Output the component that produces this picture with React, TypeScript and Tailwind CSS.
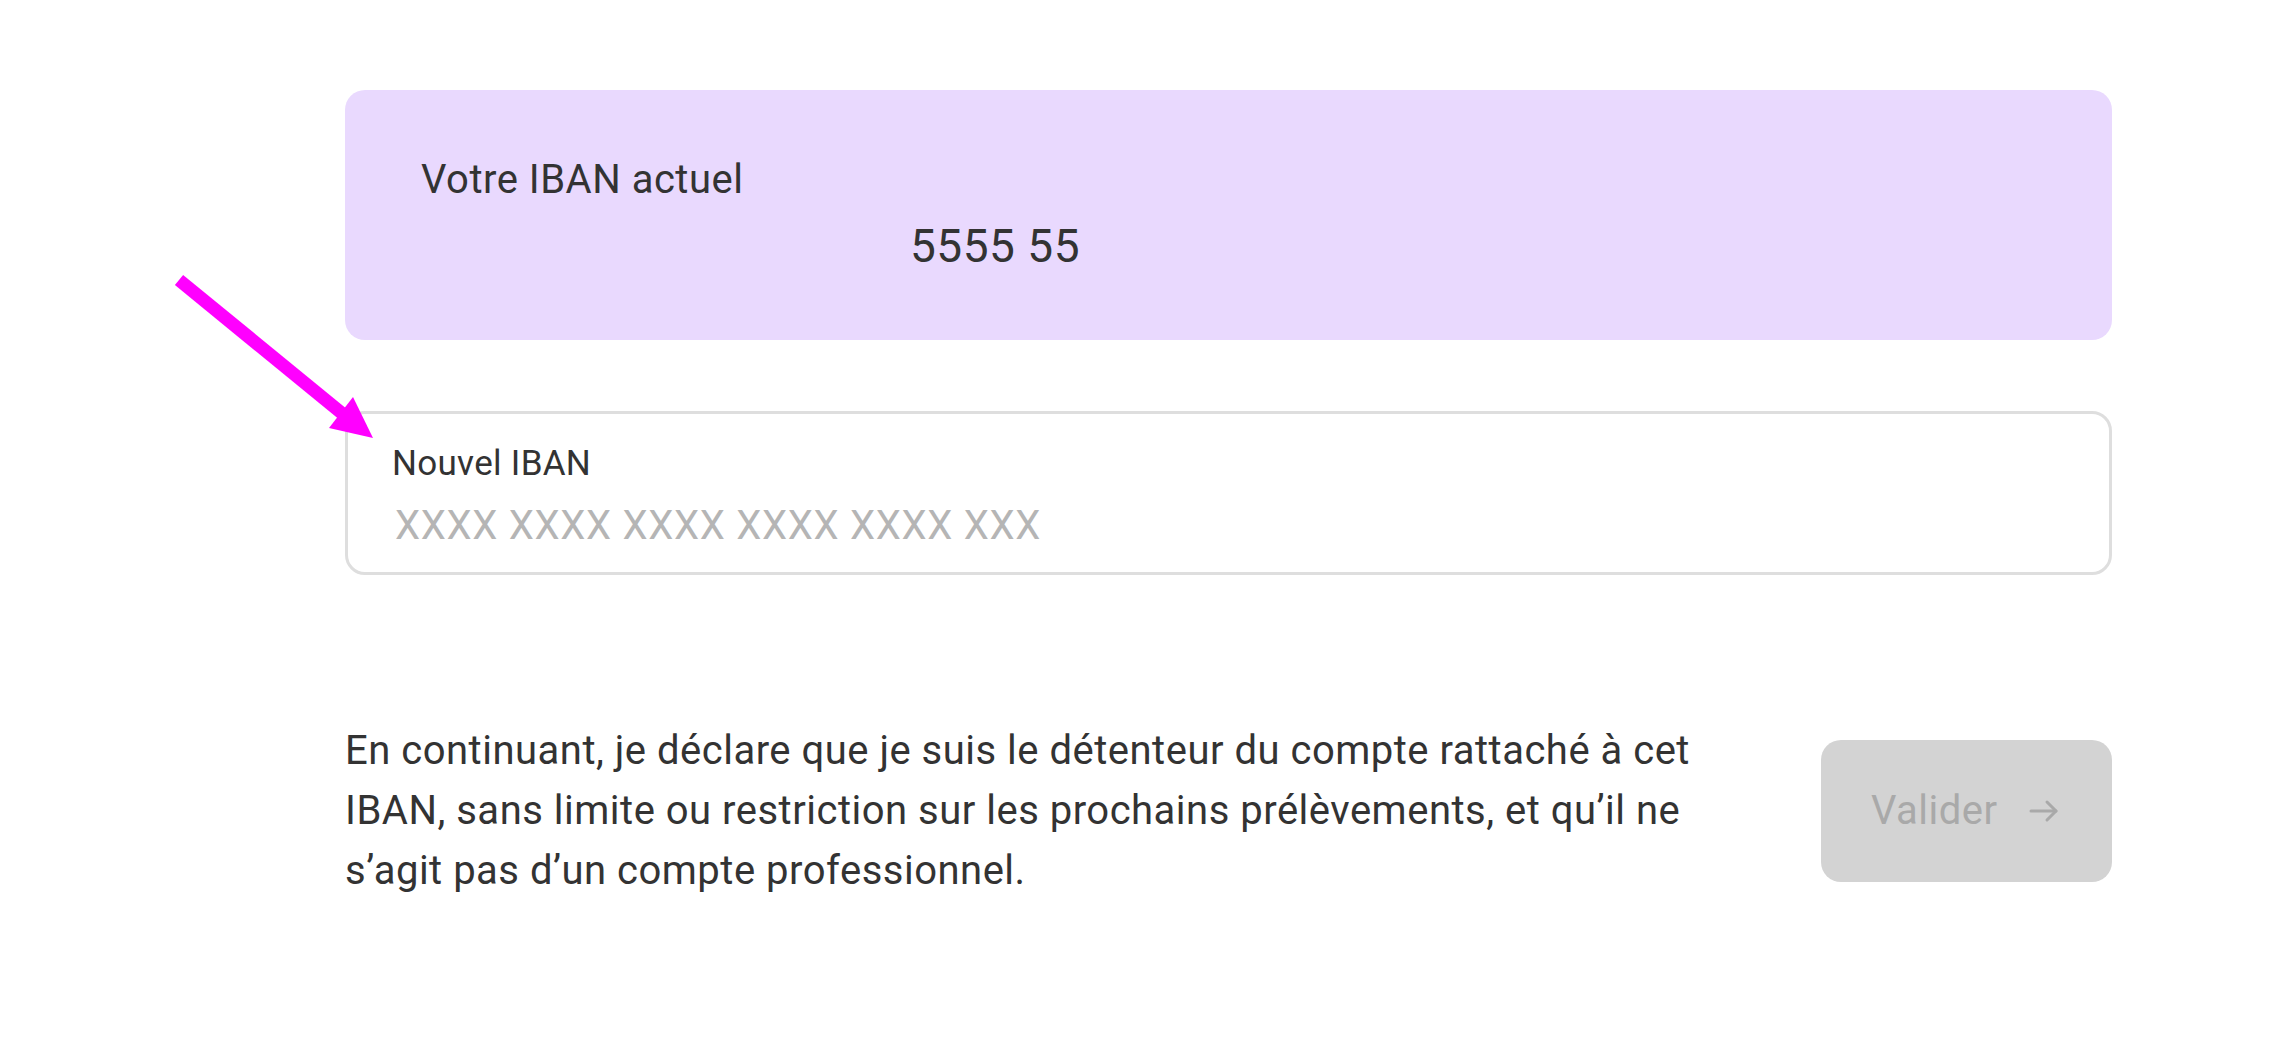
import React from 'react';

function Annotation() {
  // magenta pointer drawn over the page
  return (
    <svg className="absolute left-[160px] top-[260px] w-[240px] h-[200px]" viewBox="0 0 240 200">
      <line x1="19" y1="20" x2="184" y2="155" stroke="#ff00ff" strokeWidth="13" />
      <polygon points="213,178 193,137 169,168" fill="#ff00ff" />
    </svg>
  );
}

function ArrowIcon() {
  return (
    <svg width="32" height="24" viewBox="0 0 32 24" fill="none" stroke="currentColor" strokeWidth="3" strokeLinecap="round" strokeLinejoin="round">
      <path d="M3 12h25" />
      <path d="M19 3l9 9-9 9" />
    </svg>
  );
}

export default function App() {
  return (
    <div className="relative w-full h-[1048px] bg-white text-[#333333] tracking-[0.5px] font-['Roboto','Liberation_Sans',sans-serif]">
      <div className="ml-[345px] w-[1767px] pt-[90px]">
        <div className="h-[250px] rounded-[20px] bg-[#e9d9fe] pt-[60px] pl-[76px]">
          <p className="text-[40px] leading-[60px]">Votre IBAN actuel</p>
          <p className="ml-[489px] mt-[2px] text-[46px] leading-[69px]">5555 55</p>
        </div>

        <div className="mt-[71px] h-[164px] rounded-[20px] border-[3px] border-[#dedede] pt-[29px] pl-[44px] pr-[44px]">
          <label htmlFor="iban" className="block text-[35px] leading-[42px] tracking-[0.3px]">Nouvel IBAN</label>
          <input
            id="iban"
            type="text"
            placeholder="XXXX XXXX XXXX XXXX XXXX XXX"
            className="mt-[11px] block w-full h-[60px] pl-[3px] bg-transparent text-[40px] tracking-[0.7px] outline-none placeholder:text-[#b5b5b5]"
          />
        </div>

        <div className="mt-[146px] flex items-center justify-between">
          <p className="w-[1420px] text-[40px] leading-[60px]">
            En continuant, je déclare que je suis le détenteur du compte rattaché à cet IBAN, sans limite ou restriction sur les prochains prélèvements, et qu’il ne s’agit pas d’un compte professionnel.
          </p>
          <button
            disabled
            className="flex items-center gap-[30px] w-[291px] h-[142px] rounded-[20px] bg-[#d3d3d3] pl-[50px] text-[40px] text-[#a9a9a9]"
          >
            <span>Valider</span>
            <ArrowIcon />
          </button>
        </div>
      </div>
      <Annotation />
    </div>
  );
}
